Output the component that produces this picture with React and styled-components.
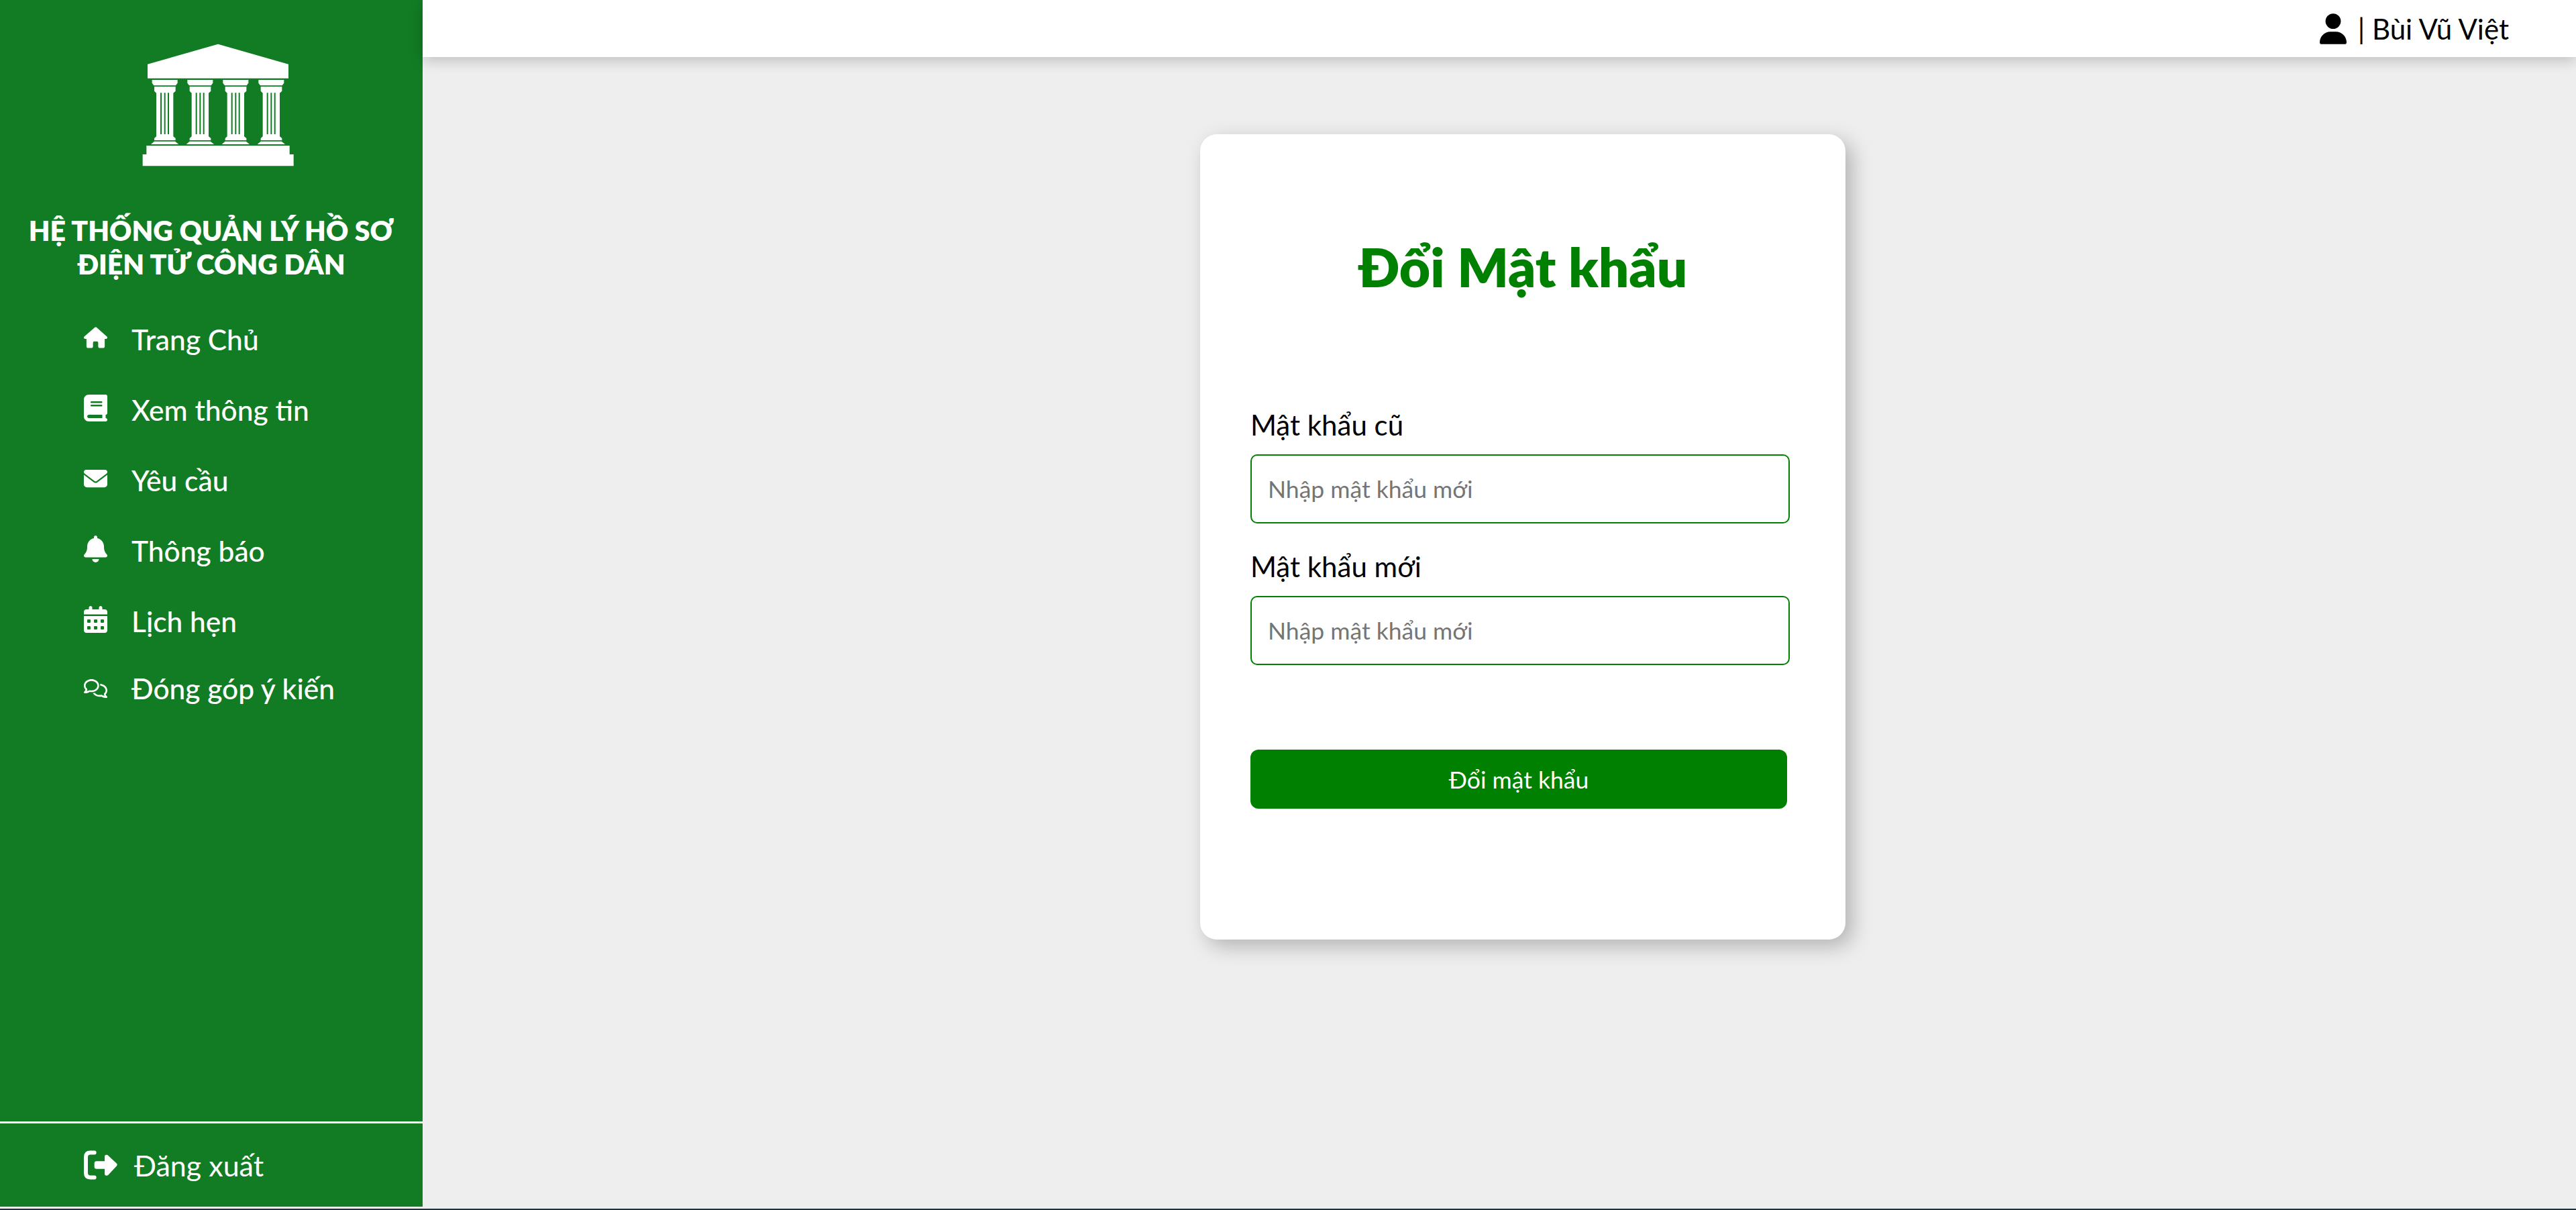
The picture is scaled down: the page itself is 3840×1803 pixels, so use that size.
import styled, { createGlobalStyle } from "styled-components";
import {
  FaHouse,
  FaBook,
  FaEnvelope,
  FaBell,
  FaCalendarDays,
  FaRegComments,
  FaUser,
} from "react-icons/fa6";

const GlobalStyle = createGlobalStyle`
  * { box-sizing: border-box; }
  html, body { margin: 0; height: 100%; overflow: hidden; }
  body {
    background: #eee;
    font-family: Lato, "Noto Sans", sans-serif;
  }
`;

const Page = styled.div`
  display: flex;
  flex-direction: column;
  height: 1803px;
`;

const Layout = styled.div`
  display: flex;
  height: 1798px;
  flex-shrink: 0;
`;

const BottomLine = styled.div`
  margin-top: 3px;
  height: 2px;
  background: #1b3140;
`;

const Sidebar = styled.aside`
  width: 630px;
  flex-shrink: 0;
  display: flex;
  flex-direction: column;
  background: #127c24;
  color: #fff;
`;

const LogoWrap = styled.div`
  display: flex;
  justify-content: center;
  padding: 55px 0 0 20px;
`;

const SidebarTitle = styled.h1`
  margin: 64px 0 0;
  font-size: 41px;
  font-weight: 800;
  line-height: 50px;
  text-align: center;
`;

const Nav = styled.nav`
  display: flex;
  flex-direction: column;
  flex: 1;
  margin-top: 34px;
`;

const NavItem = styled.a`
  display: flex;
  align-items: center;
  height: ${(p) => (p.$short ? "95px" : "105px")};
  padding-left: 125px;
  font-size: 42.5px;
  font-weight: 500;
  color: #fff;
`;

const NavIcon = styled.span`
  display: flex;
  align-items: center;
  justify-content: center;
  width: 35px;
  height: 40px;
  margin-right: 36px;
  margin-bottom: ${(p) => (p.$flat ? "0" : "6px")};
  svg {
    width: 35px;
    height: 40px;
  }
`;

const SidebarFooter = styled.div`
  display: flex;
  align-items: center;
  height: 127px;
  padding-left: 125px;
  border-top: 3px solid #fff;
  font-size: 43px;
  font-weight: 400;
`;

const LogoutIcon = styled.svg`
  width: 50px;
  height: 44px;
  margin-right: 25px;
`;

const Main = styled.main`
  flex: 1;
  display: flex;
  flex-direction: column;
  min-width: 0;
`;

const TopBar = styled.header`
  display: flex;
  align-items: center;
  justify-content: flex-end;
  height: 85px;
  padding-right: 100px;
  background: #fff;
  box-shadow: 0 5px 20px rgba(0, 0, 0, 0.2);
  font-size: 42px;
  color: #000;
  svg {
    width: 40px;
    height: 46px;
    margin-right: 17px;
  }
`;

const Card = styled.section`
  width: 962px;
  height: 1200px;
  margin: 115px 0 0 1159px;
  padding: 0 75px;
  background: #fff;
  border-radius: 25px;
  box-shadow: 10px 10px 30px rgba(0, 0, 0, 0.25);
`;

const CardTitle = styled.h2`
  margin: 0;
  padding-top: 147px;
  font-size: 80px;
  line-height: 100px;
  font-weight: 800;
  color: #008000;
  text-align: center;
`;

const Form = styled.form`
  display: flex;
  flex-direction: column;
  margin-top: 159px;
`;

const Label = styled.label`
  display: block;
  font-size: 42px;
  line-height: 55px;
  margin-bottom: 16px;
  color: #000;
`;

const Input = styled.input`
  display: block;
  width: 804px;
  height: 103px;
  margin-bottom: 37px;
  padding: 0 24px;
  border: 2px solid #008000;
  border-radius: 10px;
  outline: none;
  background: #fff;
  font-family: inherit;
  font-size: 35.5px;
  &::placeholder {
    color: #757575;
  }
`;

const SubmitButton = styled.button`
  width: 800px;
  height: 88px;
  margin-top: 89px;
  border: none;
  border-radius: 12px;
  background: #008000;
  color: #fff;
  font-family: inherit;
  font-size: 35.5px;
`;

const TempleLogo = () => {
  const columns = [0, 158, 317, 476];
  return (
    <svg width="250" height="200" viewBox="0 0 750 600" fill="#fff">
      <polygon points="375,32 690,122 690,185 60,185 60,122" />
      {columns.map((x) => (
        <g key={x} transform={`translate(${x} 0)`}>
          <path d="M80 192h114v14l-8 11H88l-8-11z" />
          <path
            fillRule="evenodd"
            d="M90 222h95v20l-10 9v194l10 8v9H90v-9l9-8V251l-9-9zM117 250v185h6V250zM134 250v185h6V250zM150 250v185h6V250z"
          />
          <path d="M90 467h93l16 13H75z" />
        </g>
      ))}
      <path d="M55 486h640v39h18v52H38v-52h17z" />
    </svg>
  );
};

const navItems = [
  { icon: FaHouse, label: "Trang Chủ" },
  { icon: FaBook, label: "Xem thông tin" },
  { icon: FaEnvelope, label: "Yêu cầu" },
  { icon: FaBell, label: "Thông báo" },
  { icon: FaCalendarDays, label: "Lịch hẹn" },
  { icon: FaRegComments, label: "Đóng góp ý kiến", short: true },
];

export default function App() {
  return (
    <Page>
      <GlobalStyle />
      <Layout>
        <Sidebar>
          <LogoWrap>
            <TempleLogo />
          </LogoWrap>
          <SidebarTitle>
            HỆ THỐNG QUẢN LÝ HỒ SƠ
            <br />
            ĐIỆN TỬ CÔNG DÂN
          </SidebarTitle>
          <Nav>
            {navItems.map((item) => (
              <NavItem key={item.label} $short={item.short}>
                <NavIcon $flat={item.short}>
                  <item.icon />
                </NavIcon>
                {item.label}
              </NavItem>
            ))}
          </Nav>
          <SidebarFooter>
            <LogoutIcon viewBox="45 43 150 129" fill="#fff">
              <path
                d="M92 52H74Q54 52 54 72V143Q54 163 74 163H92"
                fill="none"
                stroke="#fff"
                strokeWidth="18"
                strokeLinecap="round"
              />
              <path d="M92 100q0-10 10-10H138V72q0-10 8-10q5 0 9 4l37 35q4 5 0 10l-37 40q-4 4-9 4q-8 0-8-10V125H102q-10 0-10-10z" />
            </LogoutIcon>
            Đăng xuất
          </SidebarFooter>
        </Sidebar>
        <Main>
          <TopBar>
            <FaUser />| Bùi Vũ Việt
          </TopBar>
          <Card>
            <CardTitle>Đổi Mật khẩu</CardTitle>
            <Form>
              <Label>Mật khẩu cũ</Label>
              <Input placeholder="Nhập mật khẩu mới" />
              <Label>Mật khẩu mới</Label>
              <Input placeholder="Nhập mật khẩu mới" />
              <SubmitButton type="button">Đổi mật khẩu</SubmitButton>
            </Form>
          </Card>
        </Main>
      </Layout>
      <BottomLine />
    </Page>
  );
}
